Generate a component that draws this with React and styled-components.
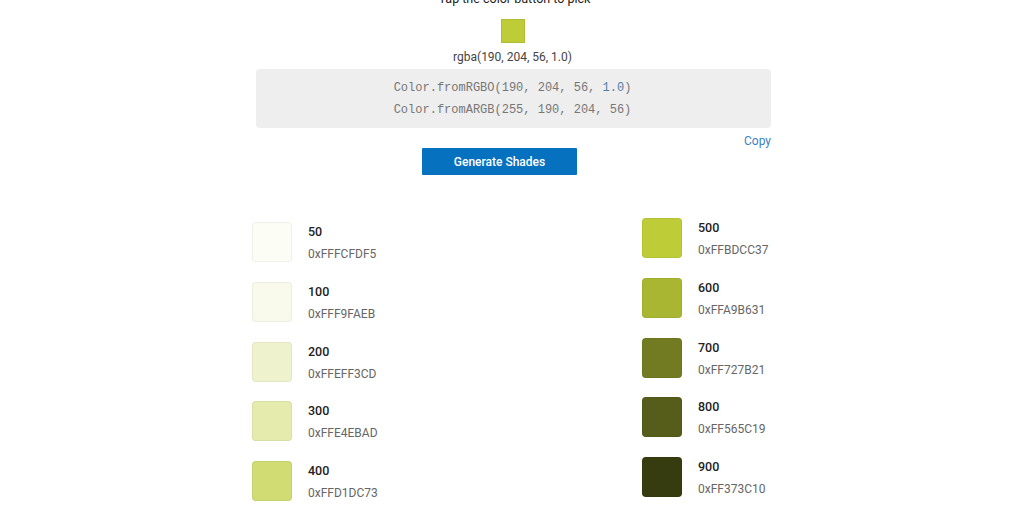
import React from 'react';
import styled, { createGlobalStyle } from 'styled-components';

const Global = createGlobalStyle`
  body {
    margin: 0;
    background: #ffffff;
    font-family: Roboto, "Liberation Sans", sans-serif;
    overflow: hidden;
  }
`;

const Page = styled.div`
  width: 1024px;
  height: 512px;
  overflow: hidden;
`;

const Column = styled.div`
  width: 515px;
  margin: -8px 0 0 256px;
  display: flex;
  flex-direction: column;
  align-items: center;
`;

const Hint = styled.div`
  font-size: 12.5px;
  line-height: 14px;
  color: #222;
  margin-left: 2px;
`;

const PickButton = styled.div`
  width: 24px;
  height: 24px;
  margin-top: 13px;
  margin-left: -2px;
  background: ${p => p.color};
  box-shadow: inset 0 0 0 1px rgba(0, 0, 0, 0.07);
`;

const RgbaText = styled.div`
  margin-top: 7px;
  font-size: 12px;
  line-height: 14px;
  color: #444;
  margin-left: -2px;
`;

const CodeBox = styled.div`
  align-self: stretch;
  margin-top: 5px;
  padding: 8px 0 7px;
  background: #eeeeee;
  border-radius: 4px;
  text-align: center;
`;

const CodeLine = styled.div`
  font-family: "Liberation Mono", "Courier New", monospace;
  font-size: 12px;
  line-height: 21px;
  height: 21px;
  color: #777;
  margin-left: -2px;
  padding-top: 1px;
`;

const Num = styled.span`
  color: ${p => (p.accent ? '#4e7fa6' : '#777')};
`;

const CopyLink = styled.div`
  align-self: flex-end;
  margin-top: 6px;
  font-size: 12px;
  line-height: 14px;
  color: #3b7fc6;
`;

const GenerateButton = styled.button`
  align-self: flex-start;
  margin-left: 166px;
  width: 155px;
  height: 27px;
  border: none;
  border-radius: 1px;
  background: #0571bf;
  color: #fff;
  font-family: Roboto, "Liberation Sans", sans-serif;
  font-size: 12px;
  font-weight: 500;
  padding: 0;
`;

const ShadeGrid = styled.div`
  display: grid;
  grid-template-columns: 390px 200px;
  margin: 43px 0 0 252px;
`;

const ShadeColumn = styled.div`
  display: flex;
  flex-direction: column;
  gap: 19.75px;
  padding-top: ${p => p.offset}px;
`;

const ShadeRow = styled.div`
  display: flex;
  align-items: flex-start;
  gap: 16px;
  height: 40px;
`;

const Swatch = styled.div`
  width: 40px;
  height: 40px;
  border-radius: 4px;
  background: ${p => p.color};
  box-shadow: inset 0 0 0 1px rgba(0, 0, 0, 0.05);
`;

const ShadeText = styled.div`
  display: flex;
  flex-direction: column;
  gap: 2px;
`;

const ShadeName = styled.div`
  font-size: 12.5px;
  font-weight: 500;
  line-height: 20px;
  color: #222;
`;

const ShadeHex = styled.div`
  font-size: 12px;
  line-height: 20px;
  color: #666;
`;

const left = [
  ['50', 'FFFCFDF5'],
  ['100', 'FFF9FAEB'],
  ['200', 'FFEFF3CD'],
  ['300', 'FFE4EBAD'],
  ['400', 'FFD1DC73'],
];

const right = [
  ['500', 'FFBDCC37'],
  ['600', 'FFA9B631'],
  ['700', 'FF727B21'],
  ['800', 'FF565C19'],
  ['900', 'FF373C10'],
];

function Shade({ name, hex }) {
  return (
    <ShadeRow>
      <Swatch color={'#' + hex.slice(2)} />
      <ShadeText>
        <ShadeName>{name}</ShadeName>
        <ShadeHex>0x{hex}</ShadeHex>
      </ShadeText>
    </ShadeRow>
  );
}

export default function App() {
  return (
    <Page>
      <Global />
      <Column>
        <Hint>Tap the color button to pick</Hint>
        <PickButton color="rgb(190, 204, 56)" />
        <RgbaText>rgba(190, 204, 56, 1.0)</RgbaText>
        <CodeBox>
          <CodeLine>Color.fromRGBO(190, 204, 56, <Num accent>1.0</Num>)</CodeLine>
          <CodeLine>Color.fromARGB(255, 190, 204, 56)</CodeLine>
        </CodeBox>
        <CopyLink>Copy</CopyLink>
        <GenerateButton>Generate Shades</GenerateButton>
      </Column>
      <ShadeGrid>
        <ShadeColumn offset={4}>
          {left.map(([n, h]) => <Shade key={n} name={n} hex={h} />)}
        </ShadeColumn>
        <ShadeColumn offset={0}>
          {right.map(([n, h]) => <Shade key={n} name={n} hex={h} />)}
        </ShadeColumn>
      </ShadeGrid>
    </Page>
  );
}
